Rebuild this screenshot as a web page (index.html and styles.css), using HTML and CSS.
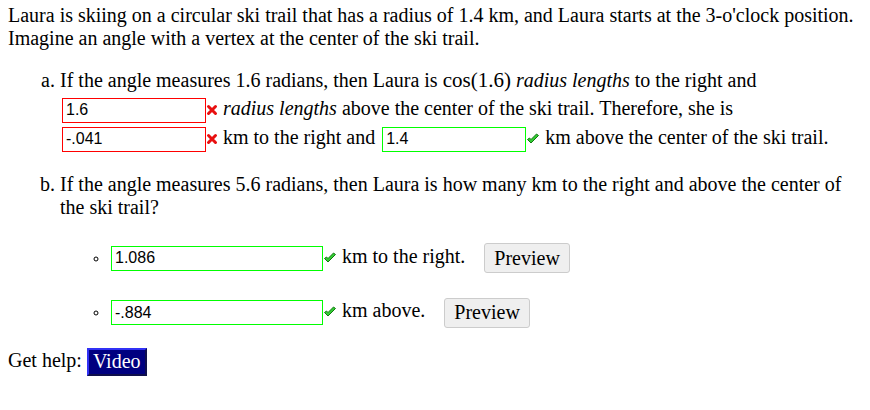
FILE: index.html
```html
<!DOCTYPE html>
<html>
<head>
<meta charset="utf-8">
<link rel="stylesheet" href="styles.css">
</head>
<body>
<div class="problem">
  <p class="intro">Laura is skiing on a circular ski trail that has a radius of 1.4 km, and Laura starts at the 3-o'clock position. Imagine an angle with a vertex at the center of the ski trail.</p>
  <ol class="parts">
    <li class="part-a">If the angle measures 1.6 radians, then Laura is <span class="math">cos(1.6)</span> <em>radius lengths</em> to the right and<br>
      <input class="ans wrong" type="text" value="1.6"><svg class="mark" width="12" height="12" viewBox="0 0 12 12"><path d="M2.5 2.5 L9.5 9.5 M9.5 2.5 L2.5 9.5" stroke="#e81010" stroke-width="3" stroke-linecap="round"/></svg> <em>radius lengths</em> above the center of the ski trail. Therefore, she is<br>
      <input class="ans wrong" type="text" value="-.041"><svg class="mark" width="12" height="12" viewBox="0 0 12 12"><path d="M2.5 2.5 L9.5 9.5 M9.5 2.5 L2.5 9.5" stroke="#e81010" stroke-width="3" stroke-linecap="round"/></svg> km to the right and <input class="ans right" type="text" value="1.4"><svg class="mark" width="14" height="12" viewBox="0 0 14 12"><path d="M1.5 6.5 L5 10 L12.5 2.5 L10.5 1 L5 6.5 L3.5 5 Z" fill="#33cc33" stroke="#117711" stroke-width="1" stroke-linejoin="round"/></svg> km above the center of the ski trail.
    </li>
    <li class="part-b">If the angle measures 5.6 radians, then Laura is how many km to the right and above the center of the ski trail?
      <ul class="subs">
        <li><input class="ans wide right" type="text" value="1.086"><svg class="mark" width="14" height="12" viewBox="0 0 14 12"><path d="M1.5 6.5 L5 10 L12.5 2.5 L10.5 1 L5 6.5 L3.5 5 Z" fill="#33cc33" stroke="#117711" stroke-width="1" stroke-linejoin="round"/></svg> km to the right. <button class="preview">Preview</button></li>
        <li><input class="ans wide right" type="text" value="-.884"><svg class="mark" width="14" height="12" viewBox="0 0 14 12"><path d="M1.5 6.5 L5 10 L12.5 2.5 L10.5 1 L5 6.5 L3.5 5 Z" fill="#33cc33" stroke="#117711" stroke-width="1" stroke-linejoin="round"/></svg> km above. <button class="preview">Preview</button></li>
      </ul>
    </li>
  </ol>
  <p class="help">Get help: <button class="video">Video</button></p>
</div>
</body>
</html>
```
FILE: styles.css
```css
html, body {
  margin: 0;
  padding: 0;
  background: #ffffff;
}
body {
  padding: 4px 8px 0 8px;
  font-family: "Liberation Serif", "Times New Roman", serif;
  font-size: 20px;
  line-height: 23px;
  color: #000000;
}
.intro {
  margin: 0 0 16px 0;
}
.parts {
  list-style-type: lower-alpha;
  margin: 0;
  padding-left: 52px;
}
.part-a {
  line-height: 28px;
  margin-bottom: 21px;
}
.part-b {
  line-height: 23px;
}
.math {
  font-family: "Liberation Serif", "Times New Roman", serif;
  font-size: 21px;
}
.ans {
  font-family: "Liberation Sans", Arial, sans-serif;
  font-size: 16px;
  height: 25px;
  box-sizing: border-box;
  width: 144px;
  padding: 1px 3px;
  margin: 0 0 0 2px;
  vertical-align: middle;
  outline: none;
  background: #fff;
  color: #000;
}
.ans.wide {
  width: 212px;
}
.wrong {
  border: 1px solid #ff0000;
}
.right {
  border: 1px solid #00ff00;
}
.mark {
  margin: 0;
  vertical-align: -1px;
}
.subs {
  list-style-type: circle;
  margin: 20px 0 0 0;
  padding-left: 49px;
}
.subs li {
  margin: 0 0 20px 0;
  line-height: 34px;
}
.subs li::marker {
  font-size: 15px;
}
.preview {
  font-family: "Liberation Serif", "Times New Roman", serif;
  font-size: 20px;
  background: #efefef;
  border: 1px solid #cccccc;
  border-radius: 3px;
  padding: 0 9px;
  margin-left: 14px;
  color: #000;
  vertical-align: middle;
  height: 30px;
}
.help {
  margin: 0;
}
.video {
  font-family: "Liberation Serif", "Times New Roman", serif;
  font-size: 20px;
  background: #000080;
  color: #ffffff;
  border: 2px outset #2020a0;
  padding: 0 4px;
  height: 28px;
  vertical-align: middle;
}
```
